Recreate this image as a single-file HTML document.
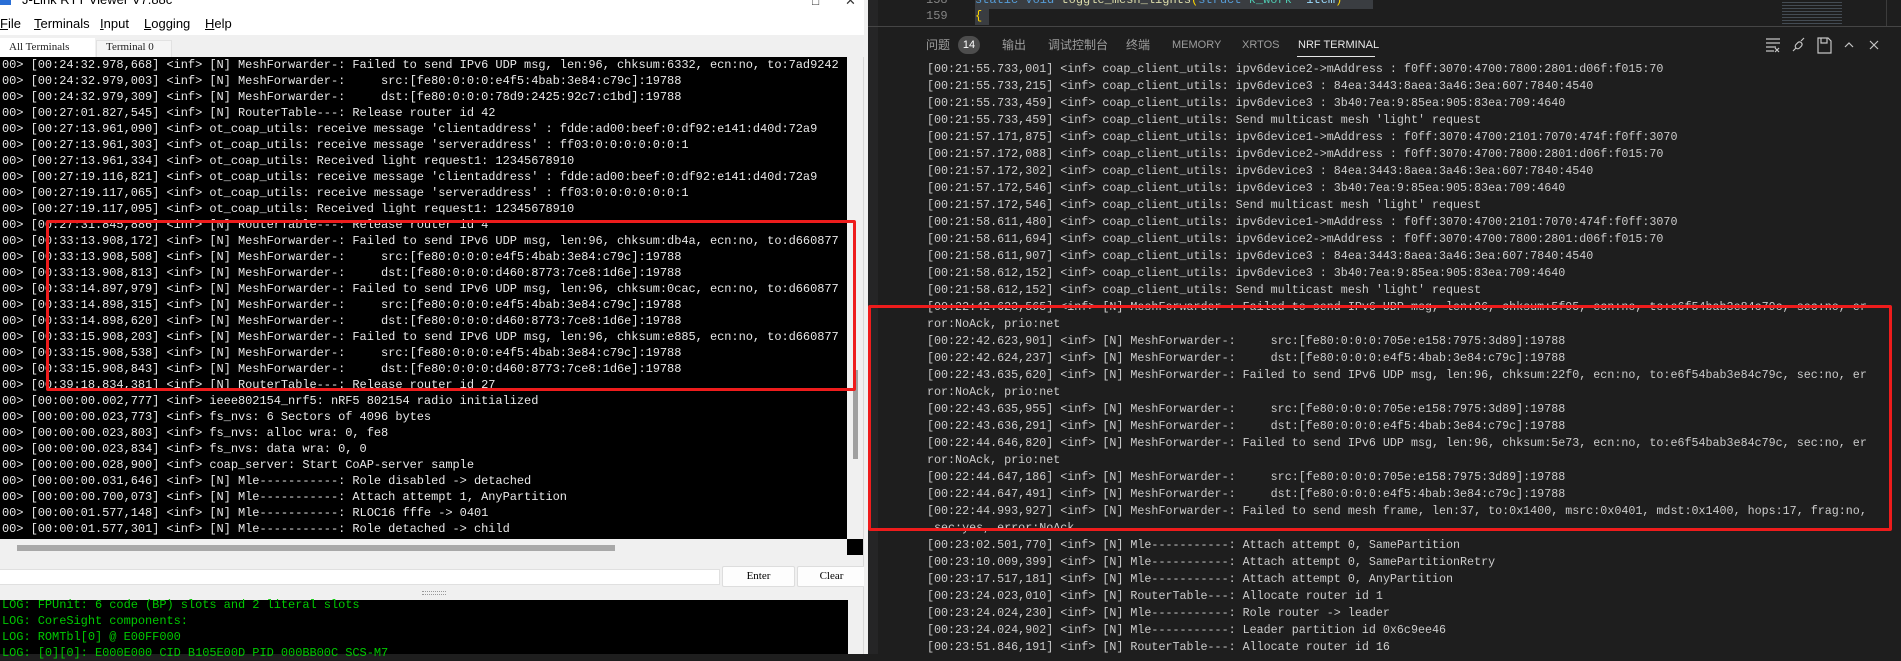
<!DOCTYPE html>
<html><head><meta charset="utf-8"><style>
*{margin:0;padding:0;box-sizing:border-box}
body{width:1901px;height:654px;overflow:hidden;background:#1e1e1e;position:relative;font-family:"Liberation Sans",sans-serif}
.abs{position:absolute}
#left{left:0;top:0;width:868px;height:654px;background:#fff}
.lt{position:absolute;left:2px;font-family:"Liberation Mono",monospace;font-size:12px;line-height:16px;white-space:pre;color:#e8e8e8;letter-spacing:-0.05px}
.rt{position:absolute;left:927px;font-family:"Liberation Mono",monospace;font-size:11.7px;line-height:17px;white-space:pre;color:#cccccc;letter-spacing:0px}
.tab{position:absolute;top:39px;height:17px;font-family:"Liberation Serif",serif;font-size:11px;line-height:17px;color:#222}
.ptab{position:absolute;top:37px;font-size:12px;color:#9d9d9d;font-family:"Liberation Sans","Noto Sans CJK SC",sans-serif;line-height:16px}
</style></head><body>
<div id="left" class="abs">
  <div class="abs" style="left:0;top:0;width:11px;height:5px;background:#2a6fd6"></div>
  <div class="abs" style="left:22px;top:-8px;font-size:13px;color:#000">J-Link RTT Viewer V7.88c</div>
  <div class="abs" style="left:812px;top:-6px;font-size:12px;color:#333">□</div>
  <div class="abs" style="left:845px;top:-7px;font-size:13px;color:#333">✕</div>
  <div class="abs" style="left:0;top:16px;font-size:13px;color:#000">
    <span class="abs" style="left:0"><u>F</u>ile</span>
    <span class="abs" style="left:34px"><u>T</u>erminals</span>
    <span class="abs" style="left:100px"><u>I</u>nput</span>
    <span class="abs" style="left:144px"><u>L</u>ogging</span>
    <span class="abs" style="left:205px"><u>H</u>elp</span>
  </div>
  <div class="abs" style="left:0;top:35px;width:868px;height:22px;background:#f0f0f0"></div>
  <div class="abs" style="left:0;top:38px;width:95px;height:19px;background:#fff"></div>
  <div class="abs" style="left:96px;top:40px;width:76px;height:17px;background:#f5f5f5;border:1px solid #e2e2e2;border-bottom:none"></div>
  <div class="tab" style="left:9px">All Terminals</div>
  <div class="tab" style="left:106px">Terminal 0</div>
  <div class="abs" style="left:0;top:57px;width:848px;height:482px;background:#000"></div>
  <div class="abs" style="left:847px;top:57px;width:17px;height:482px;background:#f0f0f0"></div>
  <div class="abs" style="left:863px;top:57px;width:1px;height:597px;background:#d8d8d8"></div>
  <div class="abs" style="left:853px;top:370px;width:5px;height:89px;background:#a0a0a0"></div>
  <div class="abs" style="left:0;top:539px;width:848px;height:16px;background:#f0f0f0"></div>
  <div class="abs" style="left:17px;top:545px;width:598px;height:6px;background:#a8a8a8"></div>
  <div class="abs" style="left:847px;top:539px;width:16px;height:16px;background:#000"></div>
  <div class="abs" style="left:0;top:555px;width:863px;height:45px;background:#f0f0f0"></div>
  <div class="abs" style="left:0;top:569px;width:720px;height:16px;background:#fff;border:1px solid #e0e0e0;border-left:none"></div>
  <div class="abs" style="left:722px;top:566px;width:73px;height:21px;background:#fdfdfd;border:1px solid #ddd;border-radius:2px;font-family:'Liberation Serif',serif;font-size:11px;text-align:center;line-height:19px">Enter</div>
  <div class="abs" style="left:797px;top:566px;width:69px;height:21px;background:#fdfdfd;border:1px solid #ddd;border-radius:2px;font-family:'Liberation Serif',serif;font-size:11px;text-align:center;line-height:19px">Clear</div>
  <div class="abs" style="left:422px;top:591px;width:24px;height:4px;border-top:1px dotted #999;border-bottom:1px dotted #999"></div>
  <div class="abs" style="left:0;top:600px;width:848px;height:54px;background:#000"></div>
  <div class="abs" style="left:848px;top:600px;width:15px;height:54px;background:#f0f0f0"></div>
  <div class="abs" style="left:864px;top:0;width:4px;height:654px;background:#f0f0f0"></div>
  <div class="lt" style="top:57px">00> [00:24:32.978,668] &lt;inf&gt; [N] MeshForwarder-: Failed to send IPv6 UDP msg, len:96, chksum:6332, ecn:no, to:7ad9242
00> [00:24:32.979,003] &lt;inf&gt; [N] MeshForwarder-:     src:[fe80:0:0:0:e4f5:4bab:3e84:c79c]:19788
00> [00:24:32.979,309] &lt;inf&gt; [N] MeshForwarder-:     dst:[fe80:0:0:0:78d9:2425:92c7:c1bd]:19788
00> [00:27:01.827,545] &lt;inf&gt; [N] RouterTable---: Release router id 42
00> [00:27:13.961,090] &lt;inf&gt; ot_coap_utils: receive message 'clientaddress' : fdde:ad00:beef:0:df92:e141:d40d:72a9
00> [00:27:13.961,303] &lt;inf&gt; ot_coap_utils: receive message 'serveraddress' : ff03:0:0:0:0:0:0:1
00> [00:27:13.961,334] &lt;inf&gt; ot_coap_utils: Received light request1: 12345678910
00> [00:27:19.116,821] &lt;inf&gt; ot_coap_utils: receive message 'clientaddress' : fdde:ad00:beef:0:df92:e141:d40d:72a9
00> [00:27:19.117,065] &lt;inf&gt; ot_coap_utils: receive message 'serveraddress' : ff03:0:0:0:0:0:0:1
00> [00:27:19.117,095] &lt;inf&gt; ot_coap_utils: Received light request1: 12345678910
00> [00:27:31.845,886] &lt;inf&gt; [N] RouterTable---: Release router id 4
00> [00:33:13.908,172] &lt;inf&gt; [N] MeshForwarder-: Failed to send IPv6 UDP msg, len:96, chksum:db4a, ecn:no, to:d660877
00> [00:33:13.908,508] &lt;inf&gt; [N] MeshForwarder-:     src:[fe80:0:0:0:e4f5:4bab:3e84:c79c]:19788
00> [00:33:13.908,813] &lt;inf&gt; [N] MeshForwarder-:     dst:[fe80:0:0:0:d460:8773:7ce8:1d6e]:19788
00> [00:33:14.897,979] &lt;inf&gt; [N] MeshForwarder-: Failed to send IPv6 UDP msg, len:96, chksum:0cac, ecn:no, to:d660877
00> [00:33:14.898,315] &lt;inf&gt; [N] MeshForwarder-:     src:[fe80:0:0:0:e4f5:4bab:3e84:c79c]:19788
00> [00:33:14.898,620] &lt;inf&gt; [N] MeshForwarder-:     dst:[fe80:0:0:0:d460:8773:7ce8:1d6e]:19788
00> [00:33:15.908,203] &lt;inf&gt; [N] MeshForwarder-: Failed to send IPv6 UDP msg, len:96, chksum:e885, ecn:no, to:d660877
00> [00:33:15.908,538] &lt;inf&gt; [N] MeshForwarder-:     src:[fe80:0:0:0:e4f5:4bab:3e84:c79c]:19788
00> [00:33:15.908,843] &lt;inf&gt; [N] MeshForwarder-:     dst:[fe80:0:0:0:d460:8773:7ce8:1d6e]:19788
00> [00:39:18.834,381] &lt;inf&gt; [N] RouterTable---: Release router id 27
00> [00:00:00.002,777] &lt;inf&gt; ieee802154_nrf5: nRF5 802154 radio initialized
00> [00:00:00.023,773] &lt;inf&gt; fs_nvs: 6 Sectors of 4096 bytes
00> [00:00:00.023,803] &lt;inf&gt; fs_nvs: alloc wra: 0, fe8
00> [00:00:00.023,834] &lt;inf&gt; fs_nvs: data wra: 0, 0
00> [00:00:00.028,900] &lt;inf&gt; coap_server: Start CoAP-server sample
00> [00:00:00.031,646] &lt;inf&gt; [N] Mle-----------: Role disabled -> detached
00> [00:00:00.700,073] &lt;inf&gt; [N] Mle-----------: Attach attempt 1, AnyPartition
00> [00:00:01.577,148] &lt;inf&gt; [N] Mle-----------: RLOC16 fffe -> 0401
00> [00:00:01.577,301] &lt;inf&gt; [N] Mle-----------: Role detached -> child</div>
  <div class="lt" style="top:597px;color:#00c800">LOG: FPUnit: 6 code (BP) slots and 2 literal slots
LOG: CoreSight components:
LOG: ROMTbl[0] @ E00FF000
LOG: [0][0]: E000E000 CID B105E00D PID 000BB00C SCS-M7</div>
  <div class="abs" style="left:46px;top:220px;width:810px;height:171px;border:3px solid #ee1c1c;border-radius:2px"></div>
</div>

<div class="abs" style="left:868px;top:0;width:1033px;height:654px;background:#1e1e1e"></div>
<div class="abs" style="left:868px;top:0;width:10px;height:654px;background:#252526"></div>
<div class="abs" style="left:975px;top:0;width:398px;height:9px;background:#3a3d41"></div>
<div class="abs" style="left:975px;top:9px;width:14px;height:16px;background:#3a3d41"></div>
<div class="abs" style="left:926px;top:-8px;font-family:'Liberation Mono',monospace;font-size:12px;line-height:16px;color:#858585;white-space:pre">158
159</div>
<div class="abs" style="left:975px;top:-8px;font-family:'Liberation Mono',monospace;font-size:12px;line-height:16px;white-space:pre;color:#dcdcaa"><span style="color:#569cd6">static void</span> toggle_mesh_lights<span style="color:#ffd700">(</span><span style="color:#569cd6">struct</span> <span style="color:#4ec9b0">k_work</span> <span style="color:#9cdcfe">*item</span><span style="color:#ffd700">)</span>
<span style="color:#ffd700">{</span></div>
<div class="abs" style="left:1782px;top:0;width:60px;height:25px;opacity:.5;background:repeating-linear-gradient(#1e1e1e 0 2px,#6a7a8a 2px 3px)"></div>
<div class="abs" style="left:1886px;top:0;width:1px;height:26px;background:#3c3c3c"></div>
<div class="abs" style="left:868px;top:26px;width:1033px;height:1px;background:#454545"></div>
<div class="ptab" style="left:926px">问题</div>
<div class="abs" style="left:958px;top:36px;width:22px;height:18px;border-radius:9px;background:#4d4d4d;color:#fff;font-size:11px;text-align:center;line-height:18px">14</div>
<div class="ptab" style="left:1002px">输出</div>
<div class="ptab" style="left:1048px">调试控制台</div>
<div class="ptab" style="left:1126px">终端</div>
<div class="ptab" style="left:1172px;font-size:11px">MEMORY</div>
<div class="ptab" style="left:1242px;font-size:11px">XRTOS</div>
<div class="ptab" style="left:1298px;font-size:11px;color:#e7e7e7">NRF TERMINAL</div>
<div class="abs" style="left:1297px;top:56px;width:78px;height:1px;background:#e7e7e7"></div>
<svg class="abs" style="left:1760px;top:36px" width="130" height="18" viewBox="0 0 130 18" fill="none" stroke="#c5c5c5" stroke-width="1.2">
  <path d="M6 3h14M6 7h14M6 11h10M6 15h8M15 12l4 4M19 12l-4 4"/>
  <path d="M33 15l3-3M36 12a2.5 2.5 0 0 1 0-3.5l2-2a2.5 2.5 0 0 1 3.5 3.5l-2 2a2.5 2.5 0 0 1-3.5 0zM41 5l3-3"/>
  <path d="M58 2h10l3 3v12H58zM61 2v5h6V2"/>
  <path d="M85 11l4-4 4 4"/>
  <path d="M110 5l8 8M118 5l-8 8"/>
</svg>
<div class="rt" style="top:61px">[00:21:55.733,001] &lt;inf&gt; coap_client_utils: ipv6device2->mAddress : f0ff:3070:4700:7800:2801:d06f:f015:70
[00:21:55.733,215] &lt;inf&gt; coap_client_utils: ipv6device3 : 84ea:3443:8aea:3a46:3ea:607:7840:4540
[00:21:55.733,459] &lt;inf&gt; coap_client_utils: ipv6device3 : 3b40:7ea:9:85ea:905:83ea:709:4640
[00:21:55.733,459] &lt;inf&gt; coap_client_utils: Send multicast mesh 'light' request
[00:21:57.171,875] &lt;inf&gt; coap_client_utils: ipv6device1->mAddress : f0ff:3070:4700:2101:7070:474f:f0ff:3070
[00:21:57.172,088] &lt;inf&gt; coap_client_utils: ipv6device2->mAddress : f0ff:3070:4700:7800:2801:d06f:f015:70
[00:21:57.172,302] &lt;inf&gt; coap_client_utils: ipv6device3 : 84ea:3443:8aea:3a46:3ea:607:7840:4540
[00:21:57.172,546] &lt;inf&gt; coap_client_utils: ipv6device3 : 3b40:7ea:9:85ea:905:83ea:709:4640
[00:21:57.172,546] &lt;inf&gt; coap_client_utils: Send multicast mesh 'light' request
[00:21:58.611,480] &lt;inf&gt; coap_client_utils: ipv6device1->mAddress : f0ff:3070:4700:2101:7070:474f:f0ff:3070
[00:21:58.611,694] &lt;inf&gt; coap_client_utils: ipv6device2->mAddress : f0ff:3070:4700:7800:2801:d06f:f015:70
[00:21:58.611,907] &lt;inf&gt; coap_client_utils: ipv6device3 : 84ea:3443:8aea:3a46:3ea:607:7840:4540
[00:21:58.612,152] &lt;inf&gt; coap_client_utils: ipv6device3 : 3b40:7ea:9:85ea:905:83ea:709:4640
[00:21:58.612,152] &lt;inf&gt; coap_client_utils: Send multicast mesh 'light' request
[00:22:42.623,565] &lt;inf&gt; [N] MeshForwarder-: Failed to send IPv6 UDP msg, len:96, chksum:5f95, ecn:no, to:e6f54bab3e84c79c, sec:no, er
ror:NoAck, prio:net
[00:22:42.623,901] &lt;inf&gt; [N] MeshForwarder-:     src:[fe80:0:0:0:705e:e158:7975:3d89]:19788
[00:22:42.624,237] &lt;inf&gt; [N] MeshForwarder-:     dst:[fe80:0:0:0:e4f5:4bab:3e84:c79c]:19788
[00:22:43.635,620] &lt;inf&gt; [N] MeshForwarder-: Failed to send IPv6 UDP msg, len:96, chksum:22f0, ecn:no, to:e6f54bab3e84c79c, sec:no, er
ror:NoAck, prio:net
[00:22:43.635,955] &lt;inf&gt; [N] MeshForwarder-:     src:[fe80:0:0:0:705e:e158:7975:3d89]:19788
[00:22:43.636,291] &lt;inf&gt; [N] MeshForwarder-:     dst:[fe80:0:0:0:e4f5:4bab:3e84:c79c]:19788
[00:22:44.646,820] &lt;inf&gt; [N] MeshForwarder-: Failed to send IPv6 UDP msg, len:96, chksum:5e73, ecn:no, to:e6f54bab3e84c79c, sec:no, er
ror:NoAck, prio:net
[00:22:44.647,186] &lt;inf&gt; [N] MeshForwarder-:     src:[fe80:0:0:0:705e:e158:7975:3d89]:19788
[00:22:44.647,491] &lt;inf&gt; [N] MeshForwarder-:     dst:[fe80:0:0:0:e4f5:4bab:3e84:c79c]:19788
[00:22:44.993,927] &lt;inf&gt; [N] MeshForwarder-: Failed to send mesh frame, len:37, to:0x1400, msrc:0x0401, mdst:0x1400, hops:17, frag:no,
 sec:yes, error:NoAck
[00:23:02.501,770] &lt;inf&gt; [N] Mle-----------: Attach attempt 0, SamePartition
[00:23:10.009,399] &lt;inf&gt; [N] Mle-----------: Attach attempt 0, SamePartitionRetry
[00:23:17.517,181] &lt;inf&gt; [N] Mle-----------: Attach attempt 0, AnyPartition
[00:23:24.023,010] &lt;inf&gt; [N] RouterTable---: Allocate router id 1
[00:23:24.024,230] &lt;inf&gt; [N] Mle-----------: Role router -> leader
[00:23:24.024,902] &lt;inf&gt; [N] Mle-----------: Leader partition id 0x6c9ee46
[00:23:51.846,191] &lt;inf&gt; [N] RouterTable---: Allocate router id 16</div>
<div class="abs" style="left:868px;top:305px;width:1024px;height:226px;border:3px solid #ee1c1c;border-radius:2px"></div>
</body></html>
